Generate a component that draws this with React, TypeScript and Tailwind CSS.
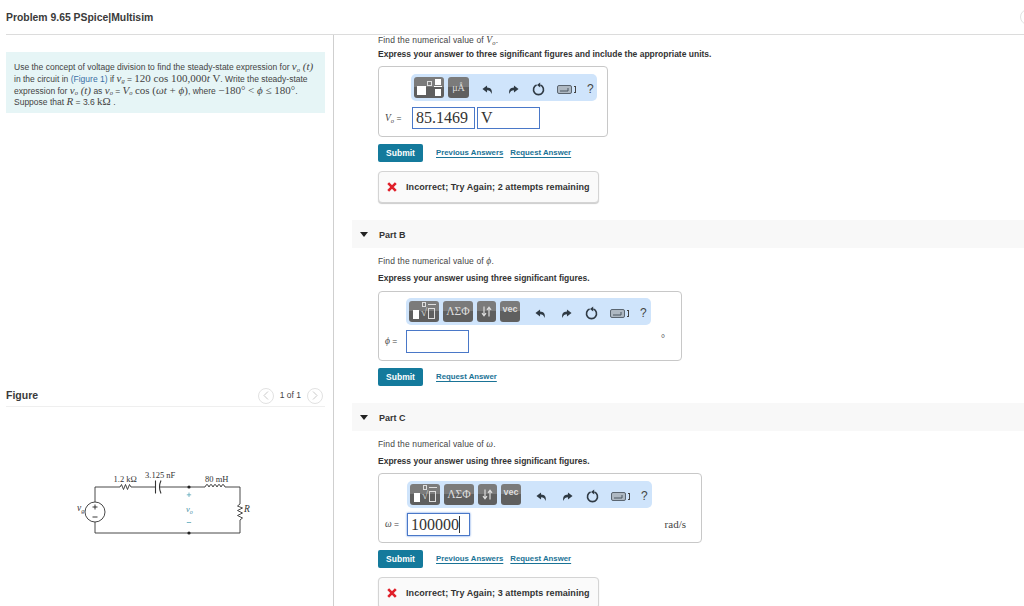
import React from 'react';

const sans = 'font-["Liberation_Sans",Arial,sans-serif]';
const serif = 'font-["Liberation_Serif","Times_New_Roman",serif]';

const M = ({ children }: { children: React.ReactNode }) => (
    <span className={`${serif} italic text-[11px]`}>{children}</span>
);

// smaller inline math used by the part prompts and answer labels
const MS = ({ children }: { children: React.ReactNode }) => (
    <span className={`${serif} italic text-[9.5px]`}>{children}</span>
);

const Sub = ({ children }: { children: React.ReactNode }) => (
    <sub className={`${serif} italic text-[6.5px]`}>{children}</sub>
);

const ToolBtn = ({ className, children }: { className: string; children?: React.ReactNode }) => (
    <div className={`h-[21px] rounded-[3px] relative overflow-hidden bg-linear-to-b from-[#7b7b7b] from-50% to-[#5f5f5f] to-50% flex items-center justify-center ${className}`}>
        {children}
    </div>
);

const Templates = () => (
    <ToolBtn className="w-[30px]">
        <span className="absolute left-[4px] bottom-[3px] w-[6px] h-[9px] bg-white" />
        <span className="absolute left-[13px] top-[1px] w-[4px] h-[5px] border border-[#ddd]" />
        <span className={`${serif} absolute left-[12px] top-[6px] text-[11px] leading-[11px] text-[#ddd]`}>√</span>
        <span className="absolute right-[3px] top-[3px] w-[8px] h-px bg-[#ddd]" />
        <span className="absolute right-[4px] bottom-[3px] w-[7px] h-[11px] border border-[#ddd]" />
    </ToolBtn>
);

const Fraction = () => (
    <ToolBtn className="w-[30px]">
        <span className="absolute left-[3px] bottom-[3px] w-[9px] h-[9px] bg-white" />
        <span className="absolute left-[13px] top-[4px] w-[5px] h-[5px] border border-[#ddd]" />
        <span className="absolute right-[3px] top-[2px] w-[6px] h-[6px] bg-white" />
        <span className="absolute right-[2px] top-[9px] w-[8px] h-px bg-white" />
        <span className="absolute right-[3px] bottom-[2px] w-[6px] h-[7px] bg-white" />
    </ToolBtn>
);

const Arrow = ({ flip }: { flip?: boolean }) => (
    <svg width="11" height="11" viewBox="0 0 12 12" className={flip ? '-scale-x-100' : ''}>
        <path d="M5.5 1.5 L0.5 5.5 L5.5 9.2 V6.8 C8 6.8 9.6 7.8 10.4 10.8 C11.6 6.6 9.6 4 5.5 3.9 Z" fill="#2f3a44" />
    </svg>
);

const Reset = () => (
    <svg width="13" height="14" viewBox="0 0 13 14" className="ml-[13px]">
        <path d="M4.6 3 A5 5 0 1 0 8.4 3" fill="none" stroke="#2f3a44" strokeWidth="1.6" />
        <path d="M7.6 0.4 L7.6 5.4 L4.4 2.9 Z" fill="#2f3a44" transform="translate(0.6 0)" />
    </svg>
);

const Keyboard = () => (
    <div className="flex items-center gap-[2px] ml-[12px]">
        <svg width="15" height="9" viewBox="0 0 15 9">
            <rect x="0.5" y="0.5" width="14" height="8" rx="1.5" fill="#aeb8c2" stroke="#5a6570" />
            <path d="M3 6 H11 M11 3 V6" stroke="#4d5862" strokeWidth="1" fill="none" />
        </svg>
        <span className="w-[2px] h-[7px] border-r border-y border-[#444]" />
    </div>
);

const Actions = () => (
    <div className="flex items-center mt-[3px]">
        <Arrow />
        <span className="ml-[15px]"><Arrow flip /></span>
        <Reset />
        <Keyboard />
        <span className={`${sans} ml-[11px] text-[12px] leading-none text-[#444]`}>?</span>
    </div>
);

const Toolbar = ({ children, width }: { children: React.ReactNode; width: string }) => (
    <div className={`h-[27px] ${width} bg-[#cfe4fb] rounded-[5px] flex items-center pl-[3px] pr-[5px]`}>
        {children}
    </div>
);

const FullTools = () => (
    <Toolbar width="w-[245px]">
        <div className="flex items-center gap-[4px]">
            <Templates />
            <ToolBtn className="w-[30px]">
                <span className={`${serif} text-[11.5px] text-[#ddd] relative z-10`}>ΛΣΦ</span>
            </ToolBtn>
            <ToolBtn className="w-[19px]">
                <svg width="11" height="11" viewBox="0 0 11 11" fill="none" stroke="#ddd" strokeWidth="1.2">
                    <path d="M3 0.5 V9.5 M1 7.2 L3 9.8 L5 7.2 M8 10.5 V1.5 M6 3.8 L8 1.2 L10 3.8" />
                </svg>
            </ToolBtn>
            <ToolBtn className="w-[20px]">
                <span className={`${sans} text-[9px] leading-[9px] text-[#ddd] font-bold mb-[5px]`}>vec</span>
            </ToolBtn>
        </div>
        <div className="ml-[15px]">
            <Actions />
        </div>
    </Toolbar>
);

const Input = ({ value, size = 'h-[23px]', className = '', caret }: { value?: string; size?: string; className?: string; caret?: boolean }) => (
    <div className={`w-[63px] ${size} border border-[#4a78c8] bg-white ${serif} text-[16px] leading-[20px] pl-[3px] text-[#333] flex items-center ${className}`}>
        {value}
        {caret && <span className="w-px h-[17px] bg-[#333]" />}
    </div>
);

const Submit = () => (
    <div className={`w-[45px] h-[18px] bg-[#147a9c] rounded-[2px] text-white ${sans} font-bold text-[8.5px] flex items-center justify-center`}>
        Submit
    </div>
);

const LinkText = ({ children }: { children: React.ReactNode }) => (
    <span className="text-[#1a7396] font-bold text-[7.8px] underline underline-offset-2">{children}</span>
);

const Incorrect = ({ text }: { text: string }) => (
    <div className="mt-[9px] w-[221px] h-[32px] shrink-0 border border-[#d4d4d4] rounded-[4px] bg-[#fafafa] shadow-[0_1px_1px_#ccc] flex items-center pl-[8px]">
        <svg width="10" height="10" viewBox="0 0 10 10">
            <path d="M1.2 1.2 L8.8 8.8 M8.8 1.2 L1.2 8.8" stroke="#e0202a" strokeWidth="2.6" />
        </svg>
        <span className="ml-[9px] pt-[2px] font-bold text-[9px] tracking-[0.07px] text-[#333]">{text}</span>
    </div>
);

const PartBar = ({ label }: { label: string }) => (
    <div className="h-[28px] bg-[#f8f8f8] flex items-center pl-[8px]">
        <svg width="8" height="5" viewBox="0 0 8 5" className="mt-[1px]"><path d="M0 0 H8 L4 5 Z" fill="#222" /></svg>
        <span className="ml-[11px] pt-[3px] font-bold text-[9px] text-[#333]">{label}</span>
    </div>
);

const Circuit = () => (
    <svg width="210" height="90" viewBox="60 460 210 90" className="block">
        <g fill="none" stroke="#333" strokeWidth="0.9">
            <path d="M95 501 V486 H120 M131 486 H155 M159 486 H189 H205 M225 486 H240 V503 M240 519 V532 H95 V521" />
            <path d="M120 486 L121.5 483.5 L123.5 488.5 L125.5 483.5 L127.5 488.5 L129.5 483.5 L131 486" />
            <path d="M155.5 479.5 V492.5" strokeWidth="1.1" />
            <path d="M161 479.5 Q158 486 161 492.5" strokeWidth="1.1" />
            <path d="M205 486 q2 -5 4 0 q2 -5 4 0 q2 -5 4 0 q2 -5 4 0 q2 -5 4 0" />
            <path d="M240 503 L237.5 505 L242.5 507 L237.5 509.5 L242.5 512 L237.5 514.5 L242.5 517 L240 519" />
            <circle cx="95" cy="511" r="10" />
            <path d="M95 503.5 V508.5 M92.5 506 H97.5 M92.5 516 H97.5" stroke="#222" />
        </g>
        <circle cx="189" cy="486" r="1.6" fill="#222" />
        <circle cx="189" cy="532" r="1.6" fill="#222" />
        <path d="M189 491.5 V496 M186.8 493.8 H191.2 M186.8 521.5 H191.2" stroke="#5aa6b8" strokeWidth="0.8" />
        <g className={serif} fill="#333" fontSize="8.5">
            <text x="113.5" y="481">1.2 kΩ</text>
            <text x="145" y="477">3.125 nF</text>
            <text x="205" y="481">80 mH</text>
            <text x="77" y="510" fontStyle="italic" fontSize="9.5">v<tspan fontSize="6.5" dy="2">g</tspan></text>
            <text x="244" y="511" fontStyle="italic" fontSize="9.5">R</text>
            <text x="186" y="511" fontStyle="italic" fill="#4a92a6">v<tspan fontSize="6" dy="2">o</tspan></text>
        </g>
    </svg>
);

const PagerBtn = ({ dir }: { dir: 'l' | 'r' }) => (
    <div className="w-[16px] h-[16px] rounded-full border border-[#e2e2e2] flex items-center justify-center">
        <svg width="6" height="9" viewBox="0 0 6 9" fill="none" stroke="#c9c9c9" strokeWidth="1">
            <path d={dir === 'l' ? 'M5 0.5 L1 4.5 L5 8.5' : 'M1 0.5 L5 4.5 L1 8.5'} />
        </svg>
    </div>
);

const Bold = ({ children, className = '' }: { children: React.ReactNode; className?: string }) => (
    <div className={`h-[11px] font-bold text-[8.5px] leading-[13px] text-[#333] ${className}`}>{children}</div>
);

const Plain = ({ children }: { children: React.ReactNode }) => (
    <div className="h-[11px] text-[8.5px] leading-[12px] tracking-[0.14px] text-[#444]">{children}</div>
);

const Line = ({ children }: { children: React.ReactNode }) => (
    <div className="h-[11.8px] whitespace-nowrap">{children}</div>
);

export default function App() {
    return (
        <div className={`${sans} h-[606px] w-[1024px] bg-white overflow-hidden flex flex-col relative`}>
            <header className="h-[35px] shrink-0 ml-[6px] border-b border-[#dcdcdc] flex items-center pt-[1px]">
                <h1 className="font-bold text-[10.4px] text-[#3a3a3a]">Problem 9.65 PSpice|Multisim</h1>
            </header>
            <div className="absolute right-[-12px] top-[9px] w-[16px] h-[16px] rounded-full border border-[#e2e2e2]" />

            <div className="flex flex-1 min-h-0">
                <aside className="w-[334px] shrink-0 border-r border-[#cfcfcf] pl-[6px] pr-[8px] pt-[17px]">
                    <div className="h-[61px] bg-[#e6f5f6] pl-[8px] pt-[9px] text-[8.5px] leading-[11.7px] text-[#444]">
                        <Line>Use the concept of voltage division to find the steady-state expression for <M>v</M><Sub>o</Sub><M> (t)</M></Line>
                        <Line>in the circuit in <span className="text-[#3a6ea5]">(Figure 1)</span> if <M>v</M><Sub>g</Sub> = <span className={`${serif} text-[11px]`}>120 cos 100,000<i>t</i> V</span>. Write the steady-state</Line>
                        <Line>expression for <M>v</M><Sub>o</Sub><M> (t)</M> as <M>v</M><Sub>o</Sub> = <span className={`${serif} text-[11px]`}><i>V</i></span><Sub>o</Sub> <span className={`${serif} text-[11px]`}>cos (<i>ωt</i> + <i>ϕ</i>)</span>, where <span className={`${serif} text-[11px]`}>−180° &lt; <i>ϕ</i> ≤ 180°</span>.</Line>
                        <Line>Suppose that <M>R</M> = 3.6 <span className={`${serif} text-[11px]`}>kΩ</span> .</Line>
                    </div>
                    <div className="mt-[272px] h-[22px] flex items-center justify-between border-b border-[#efefef] pr-[2px]">
                        <span className="font-bold text-[10.5px] text-[#3a3a3a]">Figure</span>
                        <div className="flex items-center gap-[6px] text-[8.5px] text-[#444]">
                            <PagerBtn dir="l" />
                            <span>1 of 1</span>
                            <PagerBtn dir="r" />
                        </div>
                    </div>
                    <div className="mt-[54px] -ml-[6px] pl-[60px]">
                        <Circuit />
                    </div>
                </aside>

                <main className="flex-1 pl-[18px] min-w-0">
                    <div className="pl-[26px] -mt-[1px]">
                        <Plain>Find the numerical value of <MS>V</MS><Sub>o</Sub>.</Plain>
                        <Bold className="mt-[3px]">Express your answer to three significant figures and include the appropriate units.</Bold>
                        <div className="mt-[7px] w-[230px] h-[71px] border border-[#c8c8c8] rounded-[4px] pt-[7px] pl-[32px]">
                            <Toolbar width="w-[186px]">
                                <div className="flex items-center gap-[4px]">
                                    <Fraction />
                                    <ToolBtn className="w-[21px]">
                                        <span className={`${serif} text-[10px] text-[#ddd]`}>μÅ</span>
                                    </ToolBtn>
                                </div>
                                <div className="ml-[13px]">
                                    <Actions />
                                </div>
                            </Toolbar>
                            <div className="flex items-center mt-[6px] -ml-[26px]">
                                <span className="w-[27px] text-[8.5px] text-[#444]"><MS>V</MS><Sub>o</Sub> =</span>
                                <Input value="85.1469" size="h-[22px]" />
                                <Input value="V" size="h-[22px]" className="ml-[2px]" />
                            </div>
                        </div>
                        <div className="mt-[7px] flex items-center gap-[13px]">
                            <Submit />
                            <div className="flex gap-[7px]"><LinkText>Previous Answers</LinkText><LinkText>Request Answer</LinkText></div>
                        </div>
                        <Incorrect text="Incorrect; Try Again; 2 attempts remaining" />
                    </div>

                    <div className="mt-[17px]"><PartBar label="Part B" /></div>
                    <div className="pl-[26px] pt-[7px]">
                        <Plain>Find the numerical value of <MS>ϕ</MS>.</Plain>
                        <Bold className="mt-[6px]">Express your answer using three significant figures.</Bold>
                        <div className="mt-[8px] w-[304px] h-[70px] border border-[#c8c8c8] rounded-[4px] pt-[6px] pl-[27px] relative">
                            <FullTools />
                            <div className="flex items-center mt-[5px] -ml-[21px]">
                                <span className="w-[21px] text-[8.5px] text-[#444]"><MS>ϕ</MS> =</span>
                                <Input />
                            </div>
                            <span className={`${serif} absolute right-[16px] top-[39px] text-[10px] text-[#444]`}>°</span>
                        </div>
                        <div className="mt-[7px] flex items-center gap-[13px]">
                            <Submit />
                            <LinkText>Request Answer</LinkText>
                        </div>
                    </div>

                    <div className="mt-[17px]"><PartBar label="Part C" /></div>
                    <div className="pl-[26px] pt-[7px]">
                        <Plain>Find the numerical value of <MS>ω</MS>.</Plain>
                        <Bold className="mt-[6px]">Express your answer using three significant figures.</Bold>
                        <div className="mt-[7px] w-[324px] h-[70px] border border-[#c8c8c8] rounded-[4px] pt-[7px] pl-[28px] relative">
                            <FullTools />
                            <div className="flex items-center mt-[5px] -ml-[22px]">
                                <span className="w-[22px] text-[8.5px] text-[#444]"><MS>ω</MS> =</span>
                                <Input value="100000" caret className="border-[#3f6fd0] shadow-[0_0_2px_#5b8ce0]" />
                            </div>
                            <span className={`${serif} absolute right-[15px] top-[42px] text-[11px] text-[#444]`}>rad/s</span>
                        </div>
                        <div className="mt-[7px] flex items-center gap-[13px]">
                            <Submit />
                            <div className="flex gap-[7px]"><LinkText>Previous Answers</LinkText><LinkText>Request Answer</LinkText></div>
                        </div>
                        <Incorrect text="Incorrect; Try Again; 3 attempts remaining" />
                    </div>
                </main>
            </div>
        </div>
    );
}
